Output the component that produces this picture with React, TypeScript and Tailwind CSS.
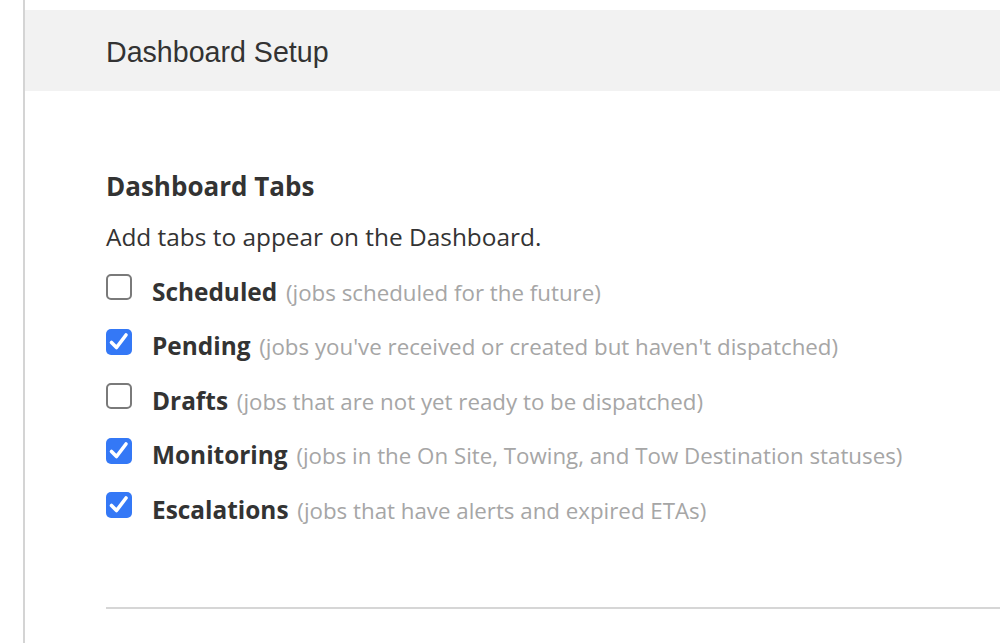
import React from "react";

const items = [
  { label: "Scheduled", desc: "(jobs scheduled for the future)", checked: false },
  { label: "Pending", desc: "(jobs you've received or created but haven't dispatched)", checked: true },
  { label: "Drafts", desc: "(jobs that are not yet ready to be dispatched)", checked: false },
  { label: "Monitoring", desc: "(jobs in the On Site, Towing, and Tow Destination statuses)", checked: true },
  { label: "Escalations", desc: "(jobs that have alerts and expired ETAs)", checked: true },
];

function Box({ checked }: { checked: boolean }) {
  if (checked) {
    return (
      <div className="w-[26px] h-[26px] rounded-[5px] bg-[#3478f6] shrink-0">
        <svg width="26" height="26" viewBox="0 0 26 26" fill="none">
          <path d="M5.5 13.5 L10.5 18.5 L20 6" stroke="white" strokeWidth="3.6" strokeLinecap="round" strokeLinejoin="round" />
        </svg>
      </div>
    );
  }
  return <div className="w-[26px] h-[26px] rounded-[5px] border-2 border-[#7a7a7a] bg-white shrink-0" />;
}

export default function App() {
  return (
    <div className="w-full h-[643px] bg-white flex overflow-hidden" style={{ fontFamily: "'Open Sans', sans-serif" }}>
      <div className="w-[23px] shrink-0" />
      <div className="flex-1 border-l-2 border-[#d4d4d4] flex flex-col pt-[10px]">
        <div className="h-[81px] bg-[#f2f2f2] flex items-center pl-[81px] pt-[3px]">
          <span className="text-[28.6px] text-[#333] font-['Liberation_Sans',Arial,sans-serif]">Dashboard Setup</span>
        </div>
        <div className="pl-[81px] flex flex-col">
          <div className="mt-[78px] h-[34px] flex items-center text-[26px] font-bold text-[#333]">Dashboard Tabs</div>
          <div className="mt-[17px] h-[34px] flex items-center text-[24.4px] text-[#333]">Add tabs to appear on the Dashboard.</div>
          <div className="mt-[6px] flex flex-col">
            {items.map((it) => (
              <div key={it.label} className="h-[54.5px] flex items-center gap-[20px]">
                <Box checked={it.checked} />
                <div className="whitespace-nowrap pt-[10px]">
                  <span className="text-[24.4px] font-bold text-[#333]">{it.label}</span>
                  <span className="text-[22.3px] text-[#a6a6a6] ml-[3px]"> {it.desc}</span>
                </div>
              </div>
            ))}
          </div>
          <div className="mt-[74px] h-[2px] bg-[#d6d6d6]" />
        </div>
      </div>
    </div>
  );
}
